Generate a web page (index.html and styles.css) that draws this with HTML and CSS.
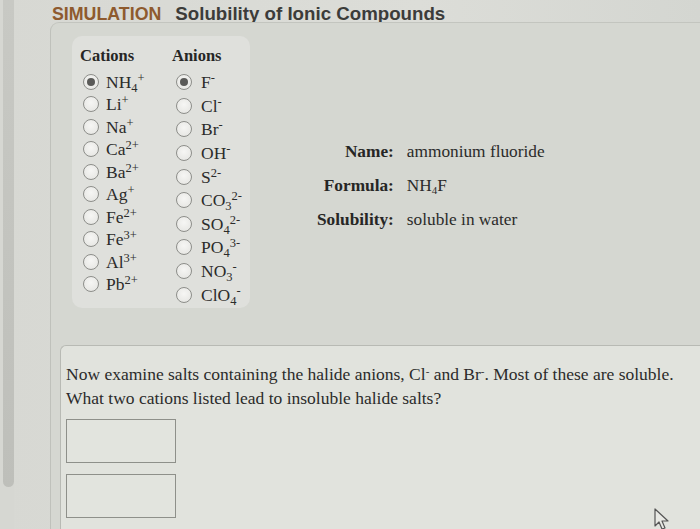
FILE: index.html
```html
<!DOCTYPE html>
<html>
<head>
<meta charset="utf-8">
<link rel="stylesheet" href="styles.css">
</head>
<body>
<div class="screen">
  <div class="strip"><div class="strip-bar"></div></div>
  <div class="main">
    <div class="title"><span class="sim">SIMULATION</span><span class="name">Solubility of Ionic Compounds</span></div>
    <div class="panel">
      <div class="upper">
        <div class="picker">
          <div class="col cations">
            <div class="head">Cations</div>
            <div class="row"><span class="radio on"></span><span class="ion">NH<sub>4</sub><sup>+</sup></span></div>
            <div class="row"><span class="radio"></span><span class="ion">Li<sup>+</sup></span></div>
            <div class="row"><span class="radio"></span><span class="ion">Na<sup>+</sup></span></div>
            <div class="row"><span class="radio"></span><span class="ion">Ca<sup>2+</sup></span></div>
            <div class="row"><span class="radio"></span><span class="ion">Ba<sup>2+</sup></span></div>
            <div class="row"><span class="radio"></span><span class="ion">Ag<sup>+</sup></span></div>
            <div class="row"><span class="radio"></span><span class="ion">Fe<sup>2+</sup></span></div>
            <div class="row"><span class="radio"></span><span class="ion">Fe<sup>3+</sup></span></div>
            <div class="row"><span class="radio"></span><span class="ion">Al<sup>3+</sup></span></div>
            <div class="row"><span class="radio"></span><span class="ion">Pb<sup>2+</sup></span></div>
          </div>
          <div class="col anions">
            <div class="head">Anions</div>
            <div class="row"><span class="radio on"></span><span class="ion">F<sup>-</sup></span></div>
            <div class="row"><span class="radio"></span><span class="ion">Cl<sup>-</sup></span></div>
            <div class="row"><span class="radio"></span><span class="ion">Br<sup>-</sup></span></div>
            <div class="row"><span class="radio"></span><span class="ion">OH<sup>-</sup></span></div>
            <div class="row"><span class="radio"></span><span class="ion">S<sup>2-</sup></span></div>
            <div class="row"><span class="radio"></span><span class="ion">CO<sub>3</sub><sup>2-</sup></span></div>
            <div class="row"><span class="radio"></span><span class="ion">SO<sub>4</sub><sup>2-</sup></span></div>
            <div class="row"><span class="radio"></span><span class="ion">PO<sub>4</sub><sup>3-</sup></span></div>
            <div class="row"><span class="radio"></span><span class="ion">NO<sub>3</sub><sup>-</sup></span></div>
            <div class="row"><span class="radio"></span><span class="ion">ClO<sub>4</sub><sup>-</sup></span></div>
          </div>
        </div>
        <div class="info">
          <div class="lbl">Name:</div><div class="val">ammonium fluoride</div>
          <div class="lbl">Formula:</div><div class="val">NH<sub>4</sub>F</div>
          <div class="lbl">Solubility:</div><div class="val">soluble in water</div>
        </div>
      </div>
      <div class="question">
        <p class="q">Now examine salts containing the halide anions, Cl<sup>-</sup> and Br<sup>-</sup>. Most of these are soluble.</p>
        <p class="q">What two cations listed lead to insoluble halide salts?</p>
        <div class="answer"></div>
        <div class="answer second"></div>
      </div>
    </div>
  </div>
  <svg class="cursor" width="18" height="22" viewBox="0 0 18 22">
    <path d="M2 1 L2 18 L6 14 L9 21 L12 20 L9 13 L15 13 Z" fill="#e8e9e4" stroke="#555" stroke-width="1.2" stroke-linejoin="round"/>
  </svg>
</div>
</body>
</html>
```

FILE: styles.css
```css
html, body {
  margin: 0;
  padding: 0;
}
body {
  width: 700px;
  height: 529px;
  overflow: hidden;
  background: #d9dad5;
  font-family: "Liberation Serif", "Times New Roman", serif;
  color: #2b2b2a;
}
.screen {
  position: relative;
  display: flex;
  width: 700px;
  height: 529px;
  overflow: hidden;
  background: linear-gradient(90deg, #d7d8d3 0%, #dcddd8 60%, #d4d6d1 100%);
}
.strip {
  width: 14px;
  flex: none;
  background: #d6d7d2;
}
.strip-bar {
  margin-left: 3px;
  width: 11px;
  height: 487px;
  background: linear-gradient(180deg, #c8c9c4 0%, #c2c3be 60%, #bebfba 100%);
  border-radius: 0 0 6px 6px;
}
.main {
  flex: 1;
  display: flex;
  flex-direction: column;
  padding-left: 36px;
  min-width: 0;
}
.title {
  height: 22px;
  flex: none;
  padding-top: 5px;
  box-sizing: border-box;
  font-family: "Liberation Sans", Arial, sans-serif;
  font-weight: bold;
  font-size: 18.7px;
  line-height: 18px;
  padding-left: 2px;
  white-space: nowrap;
}
.sim {
  color: #8e5a2e;
  margin-right: 14px;
  font-size: 17.8px;
}
.name {
  color: #3c3c3a;
}
.panel {
  flex: 1;
  display: flex;
  flex-direction: column;
  min-height: 0;
  border-top: 1px solid #c3c5bf;
  border-left: 1px solid #bfc1bb;
  border-top-left-radius: 9px;
  background: #d5d7d1;
  padding-top: 13px;
}
.upper {
  display: flex;
  align-items: flex-start;
  padding-left: 21px;
  flex: none;
}
.picker {
  width: 178px;
  height: 272px;
  box-sizing: border-box;
  background: #dfe0dc;
  border-radius: 10px;
  padding: 9px 0 0 8px;
  display: flex;
}
.col {
  display: flex;
  flex-direction: column;
}
.cations {
  width: 92px;
}
.head {
  font-weight: bold;
  font-size: 16.5px;
  line-height: 22px;
  height: 22px;
  margin-bottom: 3.5px;
  color: #262625;
}
.row {
  display: flex;
  align-items: center;
  height: 22.5px;
  padding-left: 3px;
  font-size: 17.5px;
}
.anions .row {
  height: 23.6px;
  padding-left: 4px;
}
.radio {
  width: 14px;
  height: 14px;
  flex: none;
  border: 1px solid #8d8e8a;
  border-radius: 50%;
  background: radial-gradient(circle at 50% 40%, #f6f6f4 0%, #e9e9e6 70%, #dcdcd9 100%);
  display: flex;
  align-items: center;
  justify-content: center;
  margin-right: 7px;
}
.anions .radio {
  margin-right: 9px;
}
.radio.on::after {
  content: "";
  width: 8px;
  height: 8px;
  border-radius: 50%;
  background: #5a5a58;
}
.ion {
  line-height: 18px;
}
sup, sub {
  font-size: 12.5px;
  line-height: 0;
}
sup {
  vertical-align: 0.45em;
}
sub {
  vertical-align: -0.3em;
}
.info {
  display: grid;
  grid-template-columns: auto auto;
  column-gap: 13px;
  margin-left: 67px;
  margin-top: 99px;
  font-size: 17.3px;
}
.info sub {
  font-size: 11px;
}
.lbl {
  font-weight: bold;
  text-align: right;
  line-height: 34px;
  color: #262625;
}
.val {
  line-height: 34px;
}
.question {
  flex: 1;
  margin-top: 37px;
  margin-left: 9px;
  background: #e1e3dd;
  border-top: 1px solid #b8bab4;
  border-left: 1px solid #b8bab4;
  border-top-left-radius: 6px;
  padding: 16px 0 0 5px;
}
.q {
  margin: 0;
  font-size: 17.5px;
  line-height: 24px;
  white-space: nowrap;
}
.q sup {
  font-size: 11px;
}
.answer {
  width: 110px;
  height: 44px;
  box-sizing: border-box;
  border: 1px solid #8e908a;
  background: #e2e4de;
  margin-top: 9px;
}
.answer.second {
  margin-top: 11px;
}
.cursor {
  position: absolute;
  left: 653px;
  top: 508px;
}
```
